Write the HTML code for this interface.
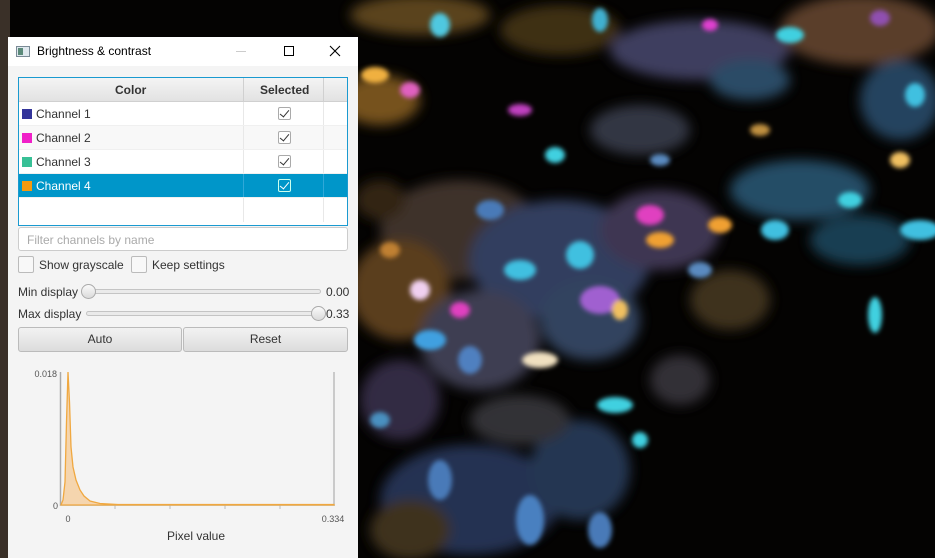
<!DOCTYPE html>
<html><head><meta charset="utf-8"><style>
*{box-sizing:border-box;margin:0;padding:0}
body{width:935px;height:558px;overflow:hidden;background:#050403;font-family:"Segoe UI","Liberation Sans",sans-serif;font-size:12px;color:#333;position:relative}
#bg{position:absolute;left:0;top:0}
#dlg{position:absolute;left:8px;top:37px;width:350px;height:521px;background:#f4f4f4}
#title{height:29px;background:#fff;position:relative}
#title .t{position:absolute;left:29px;top:7px;font-size:12px;color:#000}
.abs{position:absolute}
.tbl{position:absolute;left:10px;top:40px;width:330px;height:149px;border:1px solid #1a9ad0;background:#fff}
.hdr{height:24px;background:linear-gradient(#f4f4f4,#e2e2e2);border-bottom:1px solid #d0d0d0;position:relative;font-weight:bold;color:#333}
.row{height:24px;position:relative;border-bottom:1px solid #f0f0f0}
.row .sw{position:absolute;left:3px;top:7px;width:10px;height:10px}
.row .nm{position:absolute;left:17px;top:5px}
.cb{position:absolute;left:259px;top:5px;width:13px;height:13px;border:1px solid #aaa;border-radius:2px;background:#fff}
.cb:after{content:"";position:absolute;left:3px;top:0px;width:4px;height:8px;border-right:1.5px solid #333;border-bottom:1.5px solid #333;transform:rotate(40deg)}
.vl{position:absolute;top:0;bottom:0;width:1px;background:#e8e8e8}
.sel{background:#0096c9;color:#fff}
.sel .cb{border-color:#cfe;background:#0096c9}
.sel .cb:after{border-color:#fff}
.btn{position:absolute;top:290px;height:25px;border:1px solid #bbb;border-radius:3px;background:linear-gradient(#f2f2f2,#dcdcdc);text-align:center;line-height:23px;color:#333}
.track{position:absolute;height:5px;border:1px solid #c4c4c4;border-radius:3px;background:#eaeaea}
.knob{position:absolute;width:15px;height:15px;border-radius:50%;border:1px solid #aaa;background:linear-gradient(#fafafa,#dadada)}
.box{position:absolute;width:16px;height:17px;border:1px solid #bbb;border-radius:2px;background:#f8f8f8}
</style></head><body>
<svg id="bg" width="935" height="558">
<defs><filter id="b" x="-50%" y="-50%" width="200%" height="200%"><feGaussianBlur stdDeviation="6"/></filter>
<filter id="s" x="-50%" y="-50%" width="200%" height="200%"><feGaussianBlur stdDeviation="2.5"/></filter></defs>
<rect width="935" height="558" fill="#040302"/>
<rect x="0" y="0" width="10" height="558" fill="#3a3028"/>
<g filter="url(#b)" opacity="0.85">
<ellipse cx="420" cy="15" rx="70" ry="20" fill="#6a5020"/>
<ellipse cx="560" cy="30" rx="60" ry="25" fill="#4a3818"/>
<ellipse cx="700" cy="50" rx="90" ry="30" fill="#4a4a70"/>
<ellipse cx="860" cy="30" rx="80" ry="35" fill="#6a4a30"/>
<ellipse cx="380" cy="100" rx="40" ry="25" fill="#8a6020"/>
<ellipse cx="750" cy="80" rx="40" ry="20" fill="#305878"/>
<ellipse cx="460" cy="230" rx="80" ry="50" fill="#4a3a30"/>
<ellipse cx="560" cy="260" rx="90" ry="60" fill="#3a4a70"/>
<ellipse cx="660" cy="230" rx="60" ry="40" fill="#4a4060"/>
<ellipse cx="400" cy="290" rx="50" ry="50" fill="#6a4a20"/>
<ellipse cx="480" cy="340" rx="60" ry="50" fill="#4a4a60"/>
<ellipse cx="590" cy="320" rx="50" ry="40" fill="#3a5070"/>
<ellipse cx="800" cy="190" rx="70" ry="30" fill="#2a5a78"/>
<ellipse cx="470" cy="500" rx="90" ry="55" fill="#2a3a60"/>
<ellipse cx="580" cy="470" rx="50" ry="50" fill="#2a4060"/>
<ellipse cx="400" cy="400" rx="40" ry="40" fill="#3a3050"/>
<ellipse cx="900" cy="100" rx="40" ry="40" fill="#2a5070"/>
<ellipse cx="640" cy="130" rx="50" ry="25" fill="#3a4050"/>
<ellipse cx="730" cy="300" rx="40" ry="30" fill="#4a3a20"/>
<ellipse cx="680" cy="380" rx="30" ry="25" fill="#3a3840"/>
<ellipse cx="380" cy="200" rx="25" ry="20" fill="#3a2a18"/>
<ellipse cx="860" cy="240" rx="50" ry="25" fill="#1a4a60"/>
<ellipse cx="410" cy="530" rx="40" ry="30" fill="#4a3a20"/>
<ellipse cx="520" cy="420" rx="50" ry="25" fill="#3a3a40"/>
</g>
<g filter="url(#s)">
<ellipse cx="440" cy="25" rx="10" ry="12" fill="#50c8e0"/>
<ellipse cx="600" cy="20" rx="8" ry="12" fill="#40b0d0"/>
<ellipse cx="710" cy="25" rx="8" ry="6" fill="#e040d0"/>
<ellipse cx="790" cy="35" rx="14" ry="8" fill="#40d0e0"/>
<ellipse cx="520" cy="110" rx="12" ry="6" fill="#c040c0"/>
<ellipse cx="555" cy="155" rx="10" ry="8" fill="#40d0e0"/>
<ellipse cx="375" cy="75" rx="14" ry="8" fill="#f0b040"/>
<ellipse cx="410" cy="90" rx="10" ry="8" fill="#e060c0"/>
<ellipse cx="650" cy="215" rx="14" ry="10" fill="#e040c0"/>
<ellipse cx="580" cy="255" rx="14" ry="14" fill="#40c0e0"/>
<ellipse cx="660" cy="240" rx="14" ry="8" fill="#f0a030"/>
<ellipse cx="720" cy="225" rx="12" ry="8" fill="#f0a030"/>
<ellipse cx="520" cy="270" rx="16" ry="10" fill="#40c0e0"/>
<ellipse cx="460" cy="310" rx="10" ry="8" fill="#e040c0"/>
<ellipse cx="420" cy="290" rx="10" ry="10" fill="#f0d0f0"/>
<ellipse cx="600" cy="300" rx="20" ry="14" fill="#a060d0"/>
<ellipse cx="540" cy="360" rx="18" ry="8" fill="#f0e0c0"/>
<ellipse cx="620" cy="310" rx="8" ry="10" fill="#f0c060"/>
<ellipse cx="775" cy="230" rx="14" ry="10" fill="#40c0e0"/>
<ellipse cx="850" cy="200" rx="12" ry="8" fill="#40d0e0"/>
<ellipse cx="900" cy="160" rx="10" ry="8" fill="#f0c060"/>
<ellipse cx="920" cy="230" rx="20" ry="10" fill="#40c0e0"/>
<ellipse cx="875" cy="315" rx="7" ry="18" fill="#40d0e0"/>
<ellipse cx="615" cy="405" rx="18" ry="8" fill="#40d0e0"/>
<ellipse cx="640" cy="440" rx="8" ry="8" fill="#40d0e0"/>
<ellipse cx="430" cy="340" rx="16" ry="10" fill="#40a0e0"/>
<ellipse cx="470" cy="360" rx="12" ry="14" fill="#5080c0"/>
<ellipse cx="530" cy="520" rx="14" ry="25" fill="#4a80c0"/>
<ellipse cx="440" cy="480" rx="12" ry="20" fill="#4a7ab8"/>
<ellipse cx="600" cy="530" rx="12" ry="18" fill="#4a7ab8"/>
<ellipse cx="880" cy="18" rx="10" ry="8" fill="#9050b0"/>
<ellipse cx="915" cy="95" rx="10" ry="12" fill="#40c0e0"/>
<ellipse cx="490" cy="210" rx="14" ry="10" fill="#4a7ab8"/>
<ellipse cx="700" cy="270" rx="12" ry="8" fill="#5a8ac0"/>
<ellipse cx="390" cy="250" rx="10" ry="8" fill="#c08030"/>
<ellipse cx="380" cy="420" rx="10" ry="8" fill="#4a90c0"/>
<ellipse cx="660" cy="160" rx="10" ry="6" fill="#5a8ac0"/>
<ellipse cx="760" cy="130" rx="10" ry="6" fill="#c09040"/>
</g>
</svg>
<div id="dlg">
<div id="title">
<svg class="abs" style="left:8px;top:9px" width="14" height="11"><rect x="0.5" y="0.5" width="13" height="10" fill="#dfe8ee" stroke="#7a8a96"/><rect x="2" y="2" width="5" height="7" fill="#5b8a7a"/></svg>
<span class="t">Brightness &amp; contrast</span>
<div class="abs" style="left:228px;top:14px;width:10px;height:1px;background:#ccc"></div>
<div class="abs" style="left:276px;top:9px;width:10px;height:10px;border:1px solid #000"></div>
<svg class="abs" style="left:321px;top:8px" width="12" height="12"><path d="M1 1L11 11M11 1L1 11" stroke="#000" stroke-width="1.1"/></svg>
</div>
<div class="tbl">
<div class="hdr"><span class="abs" style="left:96px;top:5px">Color</span><span class="abs" style="left:241px;top:5px">Selected</span><div class="vl" style="left:224px;background:#d0d0d0"></div><div class="vl" style="left:304px;background:#d0d0d0"></div></div>
<div class="row"><div class="sw" style="background:#33349a"></div><span class="nm">Channel 1</span><div class="vl" style="left:224px"></div><div class="vl" style="left:304px"></div><div class="cb"></div></div>
<div class="row" style="background:#f8f8f8"><div class="sw" style="background:#f020c8"></div><span class="nm">Channel 2</span><div class="vl" style="left:224px"></div><div class="vl" style="left:304px"></div><div class="cb"></div></div>
<div class="row"><div class="sw" style="background:#38c096"></div><span class="nm">Channel 3</span><div class="vl" style="left:224px"></div><div class="vl" style="left:304px"></div><div class="cb"></div></div>
<div class="row sel"><div class="sw" style="background:#f49a10"></div><span class="nm">Channel 4</span><div class="vl" style="left:224px;background:#30a8d8"></div><div class="vl" style="left:304px;background:#30a8d8"></div><div class="cb"></div></div>
<div class="row" style="border:0"><div class="vl" style="left:224px"></div><div class="vl" style="left:304px"></div></div>
</div>
<div class="abs" style="left:10px;top:190px;width:330px;height:24px;border:1px solid #ccc;border-radius:3px;background:#fff;color:#aaa;padding:5px 8px">Filter channels by name</div>
<div class="box" style="left:10px;top:219px"></div><span class="abs" style="left:31px;top:221px">Show grayscale</span>
<div class="box" style="left:123px;top:219px"></div><span class="abs" style="left:144px;top:221px">Keep settings</span>
<span class="abs" style="left:10px;top:248px">Min display</span>
<div class="track" style="left:79px;top:252px;width:234px"></div><div class="knob" style="left:73px;top:247px"></div>
<span class="abs" style="left:318px;top:248px">0.00</span>
<span class="abs" style="left:10px;top:270px">Max display</span>
<div class="track" style="left:78px;top:274px;width:236px"></div><div class="knob" style="left:303px;top:269px"></div>
<span class="abs" style="left:318px;top:270px">0.33</span>
<div class="btn" style="left:10px;width:164px">Auto</div>
<div class="btn" style="left:175px;width:165px">Reset</div>
<svg class="abs" style="left:0;top:325px" width="350" height="196">
<line x1="52.5" y1="10" x2="52.5" y2="144" stroke="#aaa" stroke-width="1.5"/>
<line x1="326" y1="10" x2="326" y2="144" stroke="#bbb" stroke-width="1.5"/>
<line x1="52" y1="143.5" x2="327" y2="143.5" stroke="#ccc"/>
<g stroke="#bbb"><line x1="107" y1="143" x2="107" y2="147"/><line x1="162" y1="143" x2="162" y2="147"/><line x1="217" y1="143" x2="217" y2="147"/><line x1="272" y1="143" x2="272" y2="147"/></g>
<path d="M53 143 L55 138 L57 120 L58.5 60 L60 10 L61.5 40 L63 85 L65 105 L68 118 L72 128 L76 134 L82 139 L92 141.5 L110 142.5 L326 142.5 L326 143 Z" fill="#f5c890" fill-opacity="0.7" stroke="#f0a840" stroke-width="1.3"/>
<text x="49" y="15" font-size="9" fill="#555" text-anchor="end" font-family="Liberation Sans">0.018</text>
<text x="50" y="147" font-size="9" fill="#555" text-anchor="end" font-family="Liberation Sans">0</text>
<text x="60" y="160" font-size="9" fill="#555" text-anchor="middle" font-family="Liberation Sans">0</text>
<text x="325" y="160" font-size="9" fill="#555" text-anchor="middle" font-family="Liberation Sans">0.334</text>
<text x="188" y="178" font-size="12" fill="#333" text-anchor="middle" font-family="Liberation Sans">Pixel value</text>
</svg>
</div>
</body></html>
